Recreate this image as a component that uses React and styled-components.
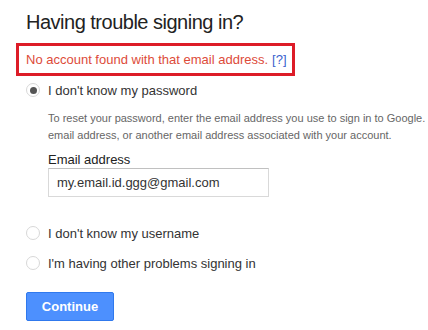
import styled, { createGlobalStyle } from "styled-components";

const GlobalStyle = createGlobalStyle`
    html, body {
        margin: 0;
        padding: 0;
        background: #fff;
    }
    body {
        font-family: Arial, "Liberation Sans", sans-serif;
        overflow: hidden;
    }
`

export default function App(){
    const options = [
        {id: "password", label: "I don't know my password", checked: true},
        {id: "username", label: "I don't know my username"},
        {id: "other", label: "I'm having other problems signing in"},
    ];

    return (
        <Page>
            <GlobalStyle/>
            <Title>Having trouble signing in?</Title>
            <ErrorBox>
                No account found with that email address. <HelpLink href="#">[?]</HelpLink>
            </ErrorBox>
            <OptionRow top={"7px"}>
                <Radio checked={options[0].checked}/>
                <OptionLabel>{options[0].label}</OptionLabel>
            </OptionRow>
            <Details>
                <Hint>To reset your password, enter the email address you use to sign in to Google.</Hint>
                <Hint>email address, or another email address associated with your account.</Hint>
                <FieldLabel htmlFor="email">Email address</FieldLabel>
                <EmailInput id="email" defaultValue="my.email.id.ggg@gmail.com"/>
            </Details>
            <OptionList>
                {options.slice(1).map((o) => (
                    <OptionRow key={o.id}>
                        <Radio checked={o.checked}/>
                        <OptionLabel>{o.label}</OptionLabel>
                    </OptionRow>
                ))}
            </OptionList>
            <Button>Continue</Button>
        </Page>
    );
}

const Page = styled.div`
    display: flex;
    flex-direction: column;
    align-items: flex-start;
    padding: 10px 0 0 26px;
    width: 428px;
    height: 330px;
    box-sizing: border-box;
`

const Title = styled.h1`
    margin: 0;
    font-size: 20px;
    letter-spacing: -0.5px;
    font-weight: normal;
    line-height: 24px;
    color: #222;
`

const ErrorBox = styled.div`
    margin: 9px 0 0 -10px;
    width: 279px;
    height: 33px;
    box-sizing: border-box;
    border: 3px solid #dd1c28;
    padding-left: 7px;
    display: flex;
    align-items: center;
    gap: 4px;
    font-size: 13px;
    color: #dd4b39;
    white-space: nowrap;
`

const HelpLink = styled.a`
    color: #3a5fcd;
    text-decoration: none;
`

const OptionList = styled.div`
    display: flex;
    flex-direction: column;
    gap: 16px;
    margin-top: 29px;
`

const OptionRow = styled.div`
    display: flex;
    align-items: center;
    gap: 8px;
    height: 14px;
    margin-top: ${(props) => props.top || 0};
`

const Radio = styled.span`
    width: 14px;
    height: 14px;
    box-sizing: border-box;
    border-radius: 50%;
    border: 1px solid #d8d8d8;
    background: #fff;
    display: inline-flex;
    align-items: center;
    justify-content: center;
    &::after {
        content: "";
        display: ${(props) => props.checked ? "block" : "none"};
        width: 7px;
        height: 7px;
        border-radius: 50%;
        background: #555;
    }
`

const OptionLabel = styled.span`
    font-size: 13px;
    color: #333;
    white-space: nowrap;
`

const Details = styled.div`
    display: flex;
    flex-direction: column;
    padding-left: 22px;
    margin-top: 13px;
`

const Hint = styled.div`
    font-size: 11px;
    line-height: 17px;
    color: #666;
    white-space: nowrap;
`

const FieldLabel = styled.label`
    margin-top: 7px;
    font-size: 13px;
    line-height: 17px;
    color: #222;
`

const EmailInput = styled.input`
    margin-top: 0;
    width: 221px;
    height: 29px;
    box-sizing: border-box;
    border: 1px solid #d9d9d9;
    border-top-color: #c0c0c0;
    padding: 0 8px;
    font-family: Arial, "Liberation Sans", sans-serif;
    font-size: 13px;
    color: #333;
    outline: none;
`

const Button = styled.button`
    margin-top: 22px;
    width: 88px;
    height: 29px;
    border: 1px solid #3079ed;
    border-radius: 2px;
    background: #4d90fe;
    color: #fff;
    font-family: Arial, "Liberation Sans", sans-serif;
    font-size: 13px;
    font-weight: bold;
`
